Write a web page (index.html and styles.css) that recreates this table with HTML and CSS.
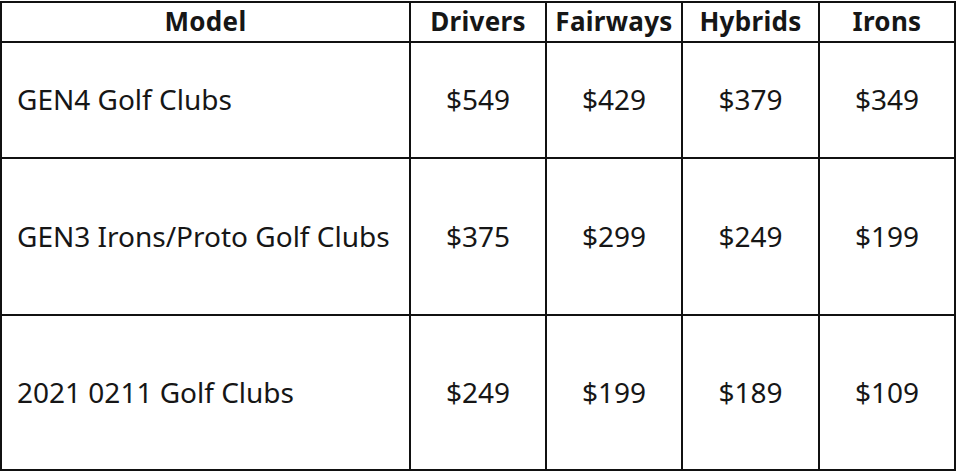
FILE: index.html
```html
<!DOCTYPE html>
<html>
<head>
<meta charset="utf-8">
<link rel="stylesheet" href="styles.css">
</head>
<body>
<table class="price-table">
  <colgroup>
    <col class="col-model">
    <col class="col-price">
    <col class="col-price">
    <col class="col-price-wide">
    <col class="col-price">
  </colgroup>
  <thead>
    <tr class="head-row">
      <th>Model</th>
      <th>Drivers</th>
      <th>Fairways</th>
      <th>Hybrids</th>
      <th>Irons</th>
    </tr>
  </thead>
  <tbody>
    <tr class="row-1">
      <td class="model">GEN4 Golf Clubs</td>
      <td>$549</td>
      <td>$429</td>
      <td>$379</td>
      <td>$349</td>
    </tr>
    <tr class="row-2">
      <td class="model">GEN3 Irons/Proto Golf Clubs</td>
      <td>$375</td>
      <td>$299</td>
      <td>$249</td>
      <td>$199</td>
    </tr>
    <tr class="row-3">
      <td class="model">2021 0211 Golf Clubs</td>
      <td>$249</td>
      <td>$199</td>
      <td>$189</td>
      <td>$109</td>
    </tr>
  </tbody>
</table>
</body>
</html>
```
FILE: styles.css
```css
html, body {
  margin: 0;
  padding: 0;
  background: #ffffff;
}

body {
  padding-top: 1px;
}

.price-table {
  border-collapse: collapse;
  table-layout: fixed;
  width: 956px;
  font-family: "Noto Sans", "DejaVu Sans", sans-serif;
  font-size: 28px;
  line-height: 1.2;
  color: #161616;
}

.col-model { width: 409px; }
.col-price { width: 136px; }
.col-price-wide { width: 137px; }

.price-table th,
.price-table td {
  border: 2px solid #111111;
  text-align: center;
  vertical-align: middle;
  padding: 0;
  box-sizing: border-box;
  white-space: nowrap;
}

.price-table th {
  font-weight: bold;
  font-size: 26px;
  letter-spacing: 0.3px;
}

.head-row { height: 40px; }
.row-1 { height: 116px; }
.row-2 { height: 157px; }
.row-3 { height: 155px; }

.price-table td.model {
  text-align: left;
  padding-left: 15px;
}
```
